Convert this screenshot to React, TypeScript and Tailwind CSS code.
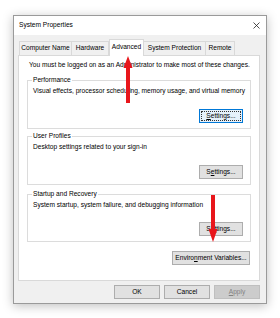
import React from "react";

const font = { fontFamily: '"Liberation Sans", Arial, sans-serif' };

function Btn({
  children,
  w,
  focused,
  disabled,
}: {
  children: React.ReactNode;
  w: string;
  focused?: boolean;
  disabled?: boolean;
}) {
  const base =
    "h-[14px] flex items-center justify-center text-[6.6px] leading-none whitespace-nowrap border ";
  if (disabled)
    return (
      <div className={base + w + " bg-[#cccccc] border-[#bfbfbf] text-[#838383]"}>
        {children}
      </div>
    );
  if (focused)
    return (
      <div className={base + w + " bg-[#e5f1fb] border-[#0078d7] text-black p-[1px]"}>
        <div className="w-full h-full flex items-center justify-center border border-dotted border-[#333]">
          {children}
        </div>
      </div>
    );
  return (
    <div className={base + w + " bg-[#e1e1e1] border-[#adadad] text-black"}>
      {children}
    </div>
  );
}

function Group({
  label,
  desc,
  h,
  btn,
}: {
  label: string;
  desc: string;
  h: string;
  btn: React.ReactNode;
}) {
  return (
    <div className={"relative border border-[#dcdcdc] mx-[8px] flex flex-col " + h}>
      <div className="absolute left-[4px] top-[-6px] bg-white px-[1px] text-[6.6px] leading-[10px] whitespace-nowrap">
        {label}
      </div>
      <div className="pl-[5px] pt-[5px] text-[6.6px] leading-[10px] whitespace-nowrap">{desc}</div>
      <div className="flex-1" />
      <div className="flex justify-end pr-[7px] pb-[5px]">{btn}</div>
    </div>
  );
}

export default function App() {
  return (
    <div className="relative w-[280px] h-[318px] bg-white pt-[15px] pl-[13px] overflow-hidden" style={font}>
      <div className="w-[254px] h-[289px] border border-[#9a9a9a] bg-[#f0f0f0] flex flex-col shadow-[0_2px_10px_rgba(0,0,0,0.25)]">
        {/* title bar */}
        <div className="h-[19px] bg-white flex items-center justify-between pl-[5px] pr-[6px]">
          <span className="text-[6.6px] leading-none text-black whitespace-nowrap">System Properties</span>
          <svg width="7" height="7" viewBox="0 0 7 7">
            <path d="M0.5 0.5 L6.5 6.5 M6.5 0.5 L0.5 6.5" stroke="#222" strokeWidth="0.8" />
          </svg>
        </div>
        {/* body */}
        <div className="flex-1 flex flex-col pl-[4px] pr-[6px] pt-[4px]">
          {/* tabs */}
          <div className="flex items-end h-[16px] pl-[1px] text-[6.6px] leading-none whitespace-nowrap">
            <div className="w-[53px] h-[14px] border border-b-0 border-[#d9d9d9] flex items-center justify-center">Computer Name</div>
            <div className="w-[37px] h-[14px] border border-b-0 border-l-0 border-[#d9d9d9] flex items-center justify-center">Hardware</div>
            <div className="w-[35px] h-[17px] -mb-[1px] bg-white border border-b-0 border-[#d9d9d9] flex items-center justify-center relative z-10 pb-[2px]">Advanced</div>
            <div className="w-[62px] h-[14px] border border-b-0 border-l-0 border-[#d9d9d9] flex items-center justify-center">System Protection</div>
            <div className="w-[29px] h-[14px] border border-b-0 border-l-0 border-[#d9d9d9] flex items-center justify-center">Remote</div>
          </div>
          {/* panel */}
          <div className="h-[226px] bg-white border border-[#d9d9d9] flex flex-col">
            <div className="pl-[10px] pt-[4px] text-[6.6px] leading-[10px] whitespace-nowrap">
              You must be logged on as an Administrator to make most of these changes.
            </div>
            <div className="mt-[10px]">
              <Group
                label="Performance"
                desc="Visual effects, processor scheduling, memory usage, and virtual memory"
                h="h-[49px]"
                btn={
                  <Btn w="w-[44px]" focused>
                    <span><span className="underline">S</span>ettings...</span>
                  </Btn>
                }
              />
            </div>
            <div className="mt-[7px]">
              <Group
                label="User Profiles"
                desc="Desktop settings related to your sign-in"
                h="h-[49px]"
                btn={
                  <Btn w="w-[44px]">
                    <span>S<span className="underline">e</span>ttings...</span>
                  </Btn>
                }
              />
            </div>
            <div className="mt-[9px]">
              <Group
                label="Startup and Recovery"
                desc="System startup, system failure, and debugging information"
                h="h-[48px]"
                btn={
                  <Btn w="w-[44px]">
                    <span>Se<span className="underline">t</span>tings...</span>
                  </Btn>
                }
              />
            </div>
            <div className="flex justify-end pr-[9px] mt-[9px]">
              <Btn w="w-[78px]">
                <span>Enviro<span className="underline">n</span>ment Variables...</span>
              </Btn>
            </div>
          </div>
          {/* bottom buttons */}
          <div className="flex justify-end gap-[4px] mt-[4px]">
            <Btn w="w-[46px]">OK</Btn>
            <Btn w="w-[46px]">Cancel</Btn>
            <Btn w="w-[46px]" disabled>
              <span><span className="underline">A</span>pply</span>
            </Btn>
          </div>
        </div>
      </div>
      {/* red arrows overlay */}
      <svg className="absolute left-0 top-0 pointer-events-none" width="280" height="318" viewBox="0 0 280 318">
        <path d="M126 103 L126 68 L123.5 68 L128 56 L132.5 68 L130 68 L130 103 Z" fill="#e8161b" />
        <path d="M211 195 L211 229 L208.5 229 L213 242 L217.5 229 L215 229 L215 195 Z" fill="#e8161b" />
      </svg>
    </div>
  );
}
